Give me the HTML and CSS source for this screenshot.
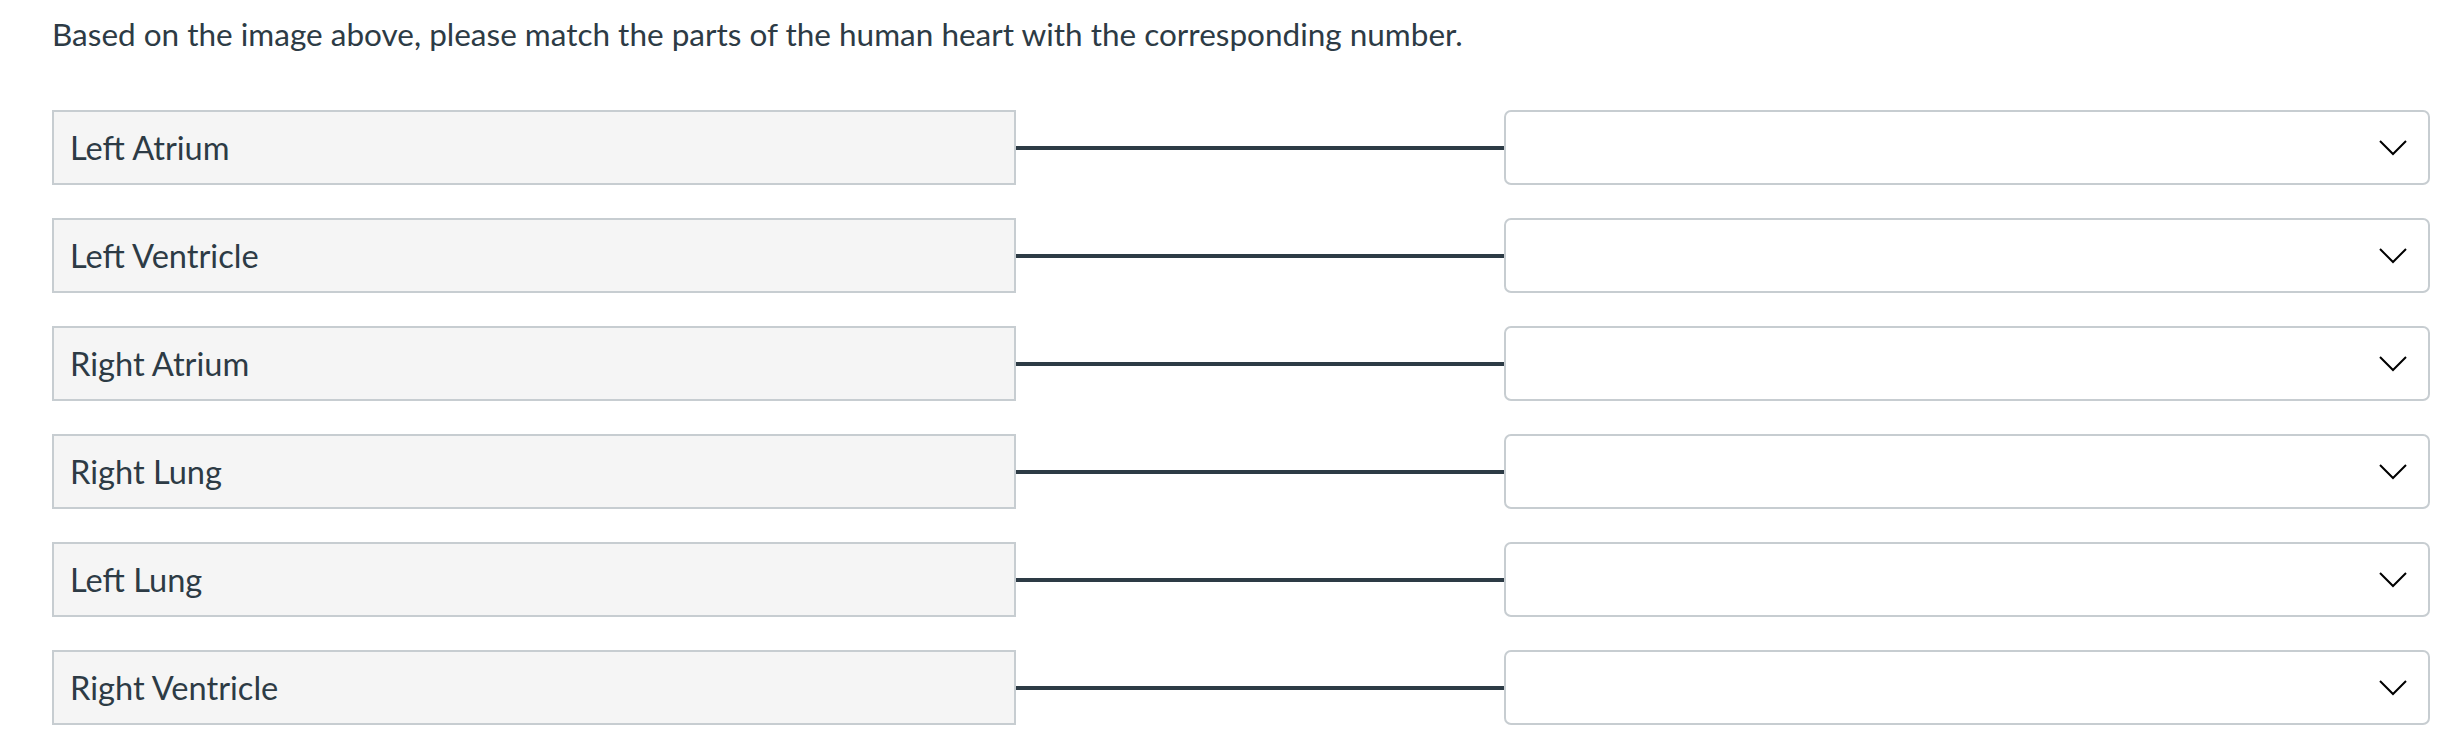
FILE: index.html
```html
<!DOCTYPE html>
<html>
<head>
<meta charset="utf-8">
<link rel="stylesheet" href="styles.css">
</head>
<body>
<div class="question">
  <p class="prompt">Based on the image above, please match the parts of the human heart with the corresponding number.</p>
  <div class="rows">
    <div class="row"><div class="label">Left Atrium</div><div class="link"></div><div class="select"><svg class="chev" viewBox="0 0 28 16"><path d="M1 1 L14 14 L27 1" /></svg></div></div>
    <div class="row"><div class="label">Left Ventricle</div><div class="link"></div><div class="select"><svg class="chev" viewBox="0 0 28 16"><path d="M1 1 L14 14 L27 1" /></svg></div></div>
    <div class="row"><div class="label">Right Atrium</div><div class="link"></div><div class="select"><svg class="chev" viewBox="0 0 28 16"><path d="M1 1 L14 14 L27 1" /></svg></div></div>
    <div class="row"><div class="label">Right Lung</div><div class="link"></div><div class="select"><svg class="chev" viewBox="0 0 28 16"><path d="M1 1 L14 14 L27 1" /></svg></div></div>
    <div class="row"><div class="label">Left Lung</div><div class="link"></div><div class="select"><svg class="chev" viewBox="0 0 28 16"><path d="M1 1 L14 14 L27 1" /></svg></div></div>
    <div class="row"><div class="label">Right Ventricle</div><div class="link"></div><div class="select"><svg class="chev" viewBox="0 0 28 16"><path d="M1 1 L14 14 L27 1" /></svg></div></div>
  </div>
</div>
</body>
</html>
```
FILE: styles.css
```css
html, body {
  margin: 0;
  padding: 0;
  background: #ffffff;
}
body {
  font-family: Lato, "Open Sans", "Liberation Sans", sans-serif;
  color: #2d3b45;
}
.question {
  padding: 0 24px 0 52px;
}
.prompt {
  margin: 0;
  padding-top: 14px;
  font-size: 31.5px;
  line-height: 40px;
  height: 56px;
}
.rows {
  display: flex;
  flex-direction: column;
  gap: 33px;
  margin-top: 40px;
}
.row {
  display: flex;
  align-items: center;
  height: 75px;
}
.label {
  box-sizing: border-box;
  width: 964px;
  height: 75px;
  border: 2px solid #c7cdd1;
  background: #f5f5f5;
  display: flex;
  align-items: center;
  padding-left: 16px;
  font-size: 32.6px;
}
.link {
  width: 488px;
  height: 4px;
  background: #2d3b45;
}
.select {
  box-sizing: border-box;
  width: 926px;
  height: 75px;
  border: 2px solid #c7cdd1;
  border-radius: 7px;
  background: #fff;
  display: flex;
  align-items: center;
  justify-content: flex-end;
  padding-right: 21px;
}
.chev {
  width: 28px;
  height: 16px;
  fill: none;
  stroke: #000;
  stroke-width: 2;
}
```
